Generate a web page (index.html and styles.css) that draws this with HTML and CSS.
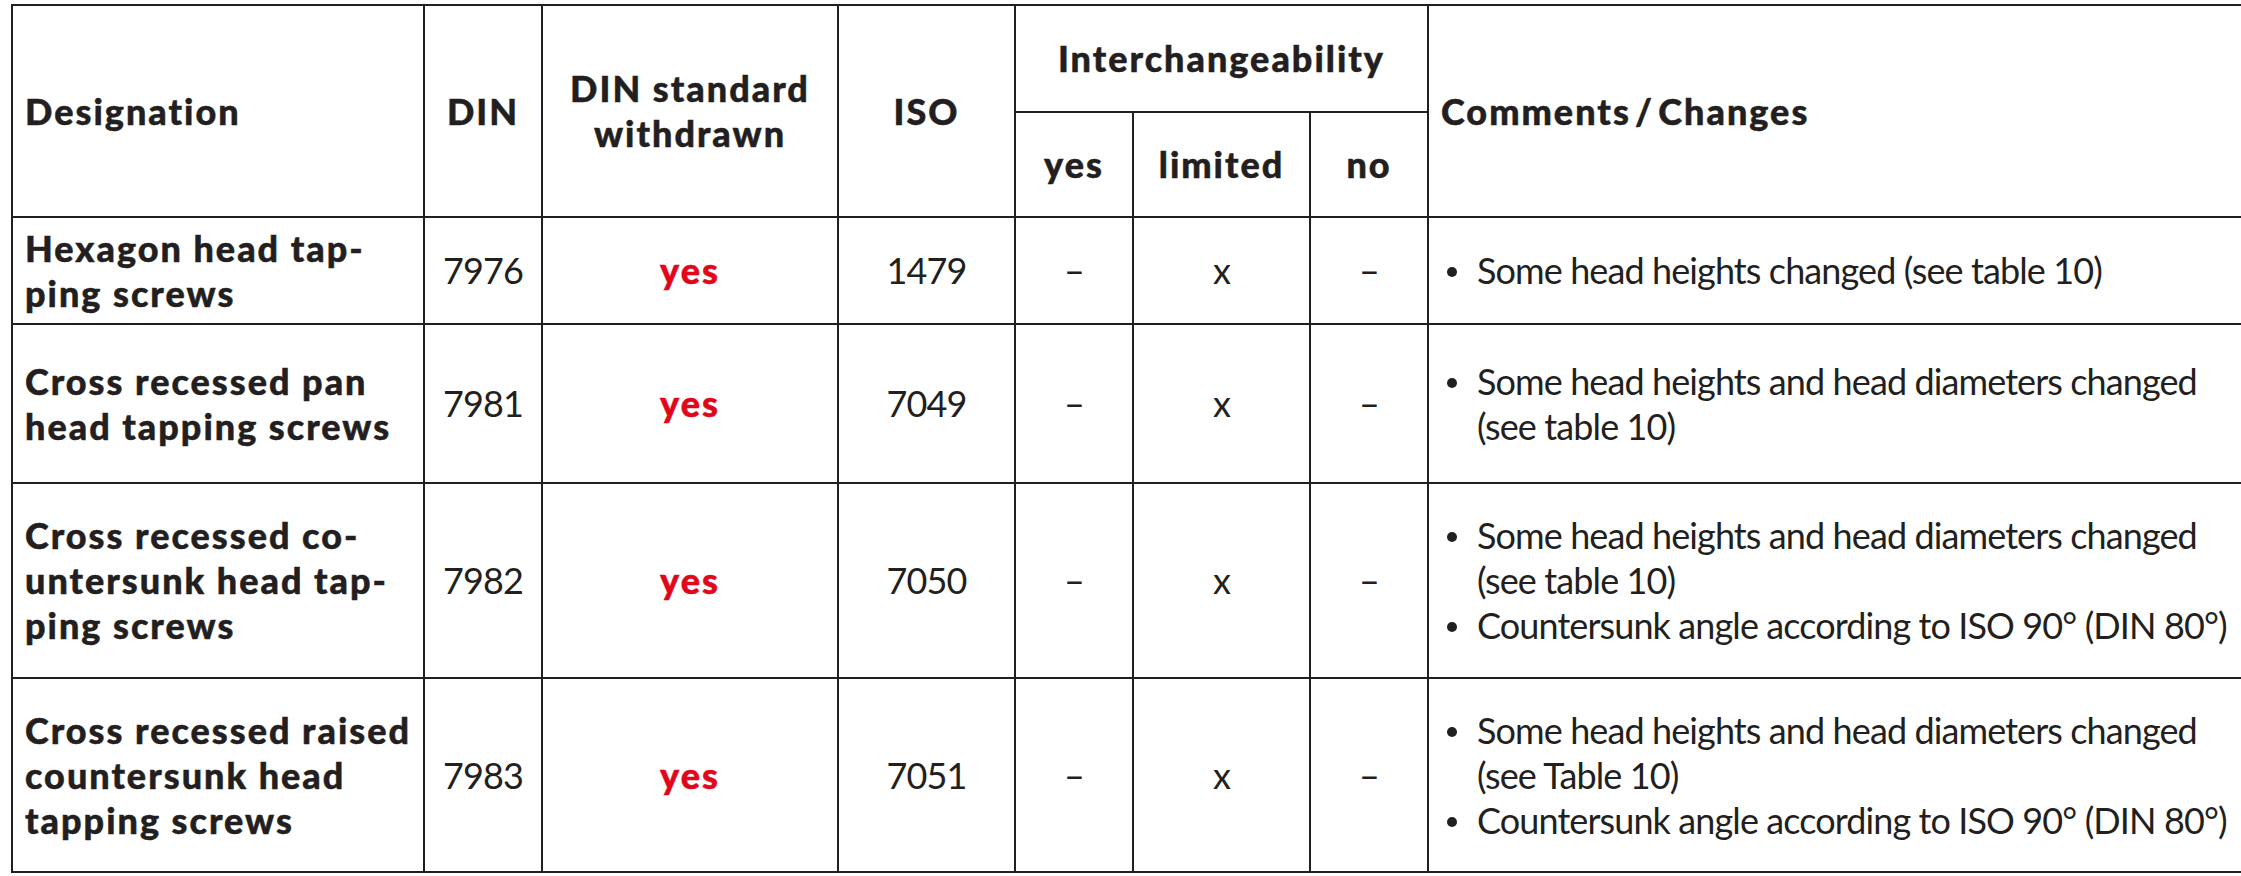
FILE: index.html
```html
<!DOCTYPE html>
<html lang="en">
<head>
<meta charset="utf-8">
<title>DIN / ISO tapping screws</title>
<link rel="stylesheet" href="styles.css">
</head>
<body>
<table class="norms">
  <colgroup>
    <col class="c-des">
    <col class="c-din">
    <col class="c-wd">
    <col class="c-iso">
    <col class="c-yes">
    <col class="c-lim">
    <col class="c-no">
    <col class="c-com">
  </colgroup>
  <thead>
    <tr class="h1">
      <th rowspan="2" class="left">Designation</th>
      <th rowspan="2">DIN</th>
      <th rowspan="2">DIN standard<br>withdrawn</th>
      <th rowspan="2">ISO</th>
      <th colspan="3">Interchangeability</th>
      <th rowspan="2" class="left">Comments&#8202;/&#8202;Changes</th>
    </tr>
    <tr class="h2">
      <th>yes</th>
      <th>limited</th>
      <th>no</th>
    </tr>
  </thead>
  <tbody>
    <tr class="r1">
      <td class="des">Hexagon head tap-<br>ping screws</td>
      <td>7976</td>
      <td class="red">yes</td>
      <td>1479</td>
      <td>–</td>
      <td>x</td>
      <td>–</td>
      <td class="com">
        <ul class="notes">
          <li><span class="dot"></span><span>Some head heights changed (see table 10)</span></li>
        </ul>
      </td>
    </tr>
    <tr class="r2">
      <td class="des">Cross recessed pan<br>head tapping screws</td>
      <td>7981</td>
      <td class="red">yes</td>
      <td>7049</td>
      <td>–</td>
      <td>x</td>
      <td>–</td>
      <td class="com">
        <ul class="notes">
          <li><span class="dot"></span><span>Some head heights and head diameters changed<br>(see table 10)</span></li>
        </ul>
      </td>
    </tr>
    <tr class="r3">
      <td class="des">Cross recessed co-<br>untersunk head tap-<br>ping screws</td>
      <td>7982</td>
      <td class="red">yes</td>
      <td>7050</td>
      <td>–</td>
      <td>x</td>
      <td>–</td>
      <td class="com">
        <ul class="notes">
          <li><span class="dot"></span><span>Some head heights and head diameters changed<br>(see table 10)</span></li>
          <li><span class="dot"></span><span>Countersunk angle according to ISO 90° (DIN 80°)</span></li>
        </ul>
      </td>
    </tr>
    <tr class="r4">
      <td class="des">Cross recessed raised<br>countersunk head<br>tapping screws</td>
      <td>7983</td>
      <td class="red">yes</td>
      <td>7051</td>
      <td>–</td>
      <td>x</td>
      <td>–</td>
      <td class="com">
        <ul class="notes">
          <li><span class="dot"></span><span>Some head heights and head diameters changed<br>(see Table 10)</span></li>
          <li><span class="dot"></span><span>Countersunk angle according to ISO 90° (DIN 80°)</span></li>
        </ul>
      </td>
    </tr>
  </tbody>
</table>
</body>
</html>
```
FILE: styles.css
```css
html, body {
  margin: 0;
  padding: 0;
  background: #ffffff;
  overflow: hidden;
}

body {
  font-family: "Lato", "Liberation Sans", sans-serif;
  color: #231f20;
}

.norms {
  border-collapse: collapse;
  table-layout: fixed;
  width: 2246px;
  margin: 4px 0 0 11px;
  font-size: 36px;
  line-height: 45px;
}

.c-des { width: 412px; }
.c-din { width: 118px; }
.c-wd  { width: 296px; }
.c-iso { width: 177px; }
.c-yes { width: 118px; }
.c-lim { width: 177px; }
.c-no  { width: 118px; }
.c-com { width: 830px; }

.norms th,
.norms td {
  border: 2px solid #231f20;
  padding: 0 12px;
  text-align: center;
  vertical-align: middle;
  white-space: nowrap;
  font-weight: 400;
  letter-spacing: -0.9px;
}

.norms th,
.norms .des,
.norms .red {
  font-weight: 900;
  letter-spacing: 2px;
  -webkit-text-stroke: 0.5px currentColor;
}

.norms .left,
.norms .des,
.norms .com {
  text-align: left;
}

.norms .red {
  color: #e2061a;
}

.h1 { height: 107px; }
.h2 { height: 105px; }
.r1 { height: 107px; }
.r2 { height: 159px; }
.r3 { height: 195px; }
.r4 { height: 194px; }

.notes {
  list-style: none;
  margin: 0;
  padding: 0;
}

.notes li {
  display: flex;
}

.notes .dot {
  flex: none;
  width: 36px;
}

.notes .dot::before {
  content: "";
  display: block;
  width: 10px;
  height: 10px;
  border-radius: 50%;
  background: #231f20;
  margin: 19px 0 0 6px;
}
```
